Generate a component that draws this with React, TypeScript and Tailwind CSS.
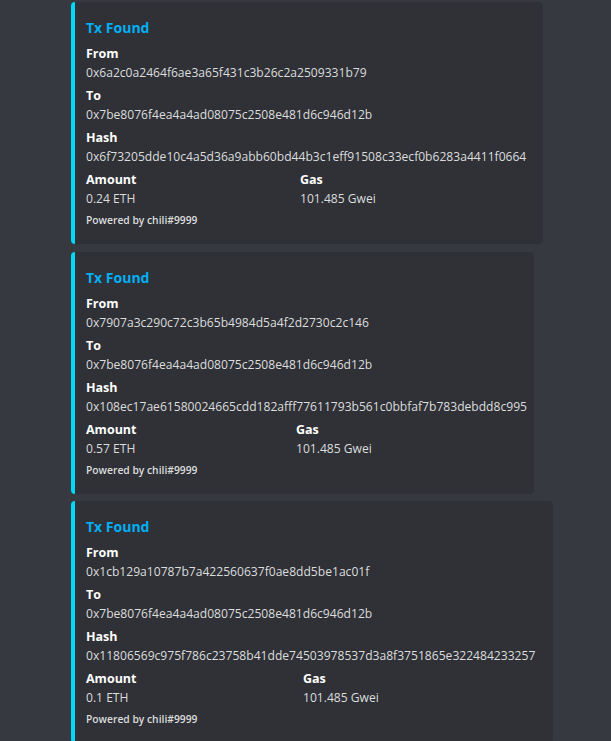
import React from "react";

type Tx = {
  from: string;
  to: string;
  hash: string;
  amount: string;
  gas: string;
  width: string;
  gasCol: string;
  mt: string;
};

const txs: Tx[] = [
  {
    from: "0x6a2c0a2464f6ae3a65f431c3b26c2a2509331b79",
    to: "0x7be8076f4ea4a4ad08075c2508e481d6c946d12b",
    hash: "0x6f73205dde10c4a5d36a9abb60bd44b3c1eff91508c33ecf0b6283a4411f0664",
    amount: "0.24 ETH",
    gas: "101.485 Gwei",
    width: "w-[472px]",
    gasCol: "grid-cols-[214px_1fr]",
    mt: "mt-0",
  },
  {
    from: "0x7907a3c290c72c3b65b4984d5a4f2d2730c2c146",
    to: "0x7be8076f4ea4a4ad08075c2508e481d6c946d12b",
    hash: "0x108ec17ae61580024665cdd182afff77611793b561c0bbfaf7b783debdd8c995",
    amount: "0.57 ETH",
    gas: "101.485 Gwei",
    width: "w-[463px]",
    gasCol: "grid-cols-[210px_1fr]",
    mt: "mt-[8px]",
  },
  {
    from: "0x1cb129a10787b7a422560637f0ae8dd5be1ac01f",
    to: "0x7be8076f4ea4a4ad08075c2508e481d6c946d12b",
    hash: "0x11806569c975f786c23758b41dde74503978537d3a8f3751865e322484233257",
    amount: "0.1 ETH",
    gas: "101.485 Gwei",
    width: "w-[482px]",
    gasCol: "grid-cols-[217px_1fr]",
    mt: "mt-[7px]",
  },
];

function Field({ name, value }: { name: string; value: string }) {
  return (
    <div className="flex flex-col">
      <div className="text-[12.5px] leading-[17px] font-bold text-white mb-[2px]">{name}</div>
      <div className="text-[12.1px] leading-[18px] text-[#dcddde] whitespace-nowrap">{value}</div>
    </div>
  );
}

function Embed({ tx }: { tx: Tx }) {
  return (
    <div
      className={`${tx.width} ${tx.mt} bg-[#2f3136] rounded-[4px] border-l-4 border-[#00d8f8] pt-[8px] pr-[16px] pb-[16px] pl-[11px]`}
    >
      <div className="mt-[8px] text-[14px] leading-[20px] font-bold text-[#00aff4]">Tx Found</div>
      <div className="mt-[7px] flex flex-col gap-[5px]">
        <Field name="From" value={tx.from} />
        <Field name="To" value={tx.to} />
        <Field name="Hash" value={tx.hash} />
        <div className={`grid ${tx.gasCol}`}>
          <Field name="Amount" value={tx.amount} />
          <Field name="Gas" value={tx.gas} />
        </div>
      </div>
      <div className="mt-[4px] text-[10.3px] leading-[16px] font-semibold text-[#dcddde]">
        Powered by chili#9999
      </div>
    </div>
  );
}

export default function App() {
  return (
    <div
      className="min-h-[741px] w-[611px] bg-[#36393f] pl-[71px] pt-[2px] flex flex-col overflow-hidden"
      style={{ fontFamily: '"Open Sans", "Noto Sans", sans-serif' }}
    >
      {txs.map((tx, i) => (
        <Embed key={i} tx={tx} />
      ))}
    </div>
  );
}
